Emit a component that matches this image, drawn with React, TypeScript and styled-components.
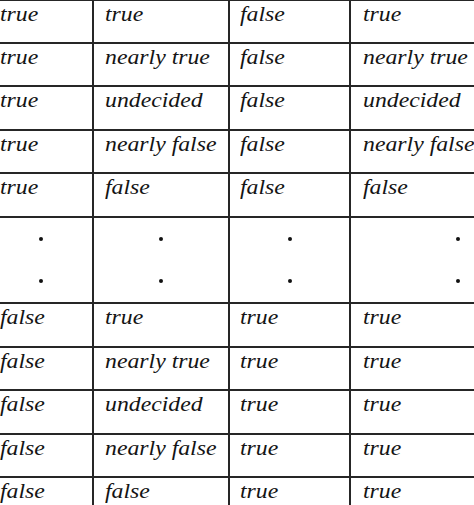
import React from "react";
import styled, { createGlobalStyle } from "styled-components";

const Global = createGlobalStyle`
  html, body { margin: 0; padding: 0; background: #fff; overflow: hidden; }
  body { width: 474px; height: 505px; }
`;

const Grid = styled.div`
  display: grid;
  grid-template-columns: 103px 134px 119px 214px;
  grid-auto-rows: 41.4px;
  gap: 2px;
  padding: 2px;
  background: #262626;
  width: max-content;
  margin: -1.4px 0 0 -13px;
  font-family: "Liberation Serif", "Times New Roman", serif;
  font-style: italic;
  font-size: 22px;
  color: #141414;
`;

const Cell = styled.div<{ $pad?: number }>`
  background: #fff;
  display: flex;
  align-items: flex-start;
  padding: 2px 0 0 ${(p) => p.$pad ?? 11}px;
  white-space: nowrap;
  overflow: hidden;
  line-height: 1;
`;

const Word = styled.span`
  display: inline-block;
  transform: scaleX(1.08);
  transform-origin: left center;
`;

const DotCell = styled.div`
  grid-row: span 2;
  background: #fff;
  display: flex;
  flex-direction: column;
  align-items: center;
  justify-content: center;
  gap: 38px;
`;

const Dot = styled.span`
  width: 4px;
  height: 4px;
  border-radius: 50%;
  background: #111;
`;

const rowsTop = [
  ["true", "true", "false", "true"],
  ["true", "nearly true", "false", "nearly true"],
  ["true", "undecided", "false", "undecided"],
  ["true", "nearly false", "false", "nearly false"],
  ["true", "false", "false", "false"],
];
const rowsBottom = [
  ["false", "true", "true", "true"],
  ["false", "nearly true", "true", "true"],
  ["false", "undecided", "true", "true"],
  ["false", "nearly false", "true", "true"],
  ["false", "false", "true", "true"],
];

const pads = [11, 11, 10, 12];

export default function App() {
  return (
    <>
      <Global />
      <Grid>
        {rowsTop.map((r, i) =>
          r.map((c, j) => (
            <Cell key={`t${i}-${j}`} $pad={pads[j]}>
              <Word>{c}</Word>
            </Cell>
          ))
        )}
        {[0, 1, 2, 3].map((j) => (
          <DotCell key={`d${j}`}>
            <Dot />
            <Dot />
          </DotCell>
        ))}
        {rowsBottom.map((r, i) =>
          r.map((c, j) => (
            <Cell key={`b${i}-${j}`} $pad={pads[j]}>
              <Word>{c}</Word>
            </Cell>
          ))
        )}
      </Grid>
    </>
  );
}
